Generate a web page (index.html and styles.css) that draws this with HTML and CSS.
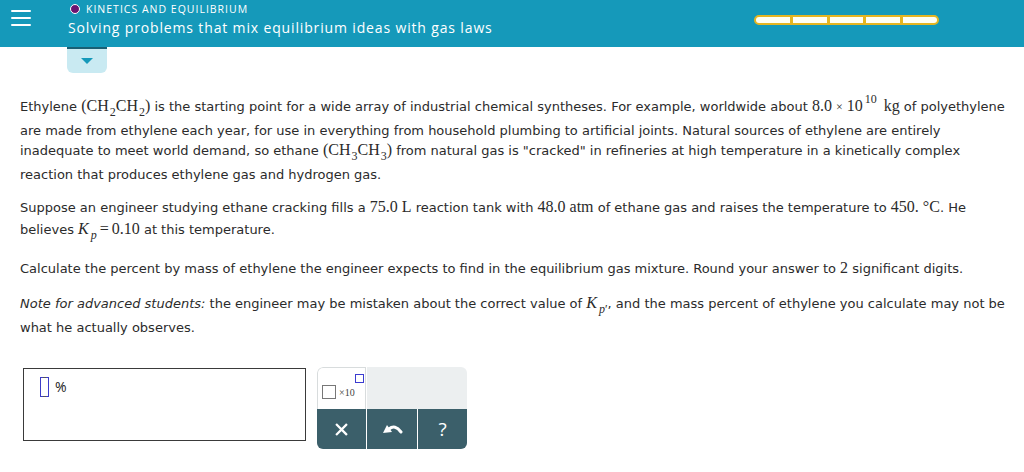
FILE: index.html
```html
<!DOCTYPE html>
<html>
<head>
<meta charset="utf-8">
<link rel="stylesheet" href="styles.css">
</head>
<body>
<header class="topbar">
  <div class="menu"><span></span><span></span><span></span></div>
  <div class="titles">
    <div class="topic"><span class="dot"></span>KINETICS AND EQUILIBRIUM</div>
    <div class="title">Solving problems that mix equilibrium ideas with gas laws</div>
  </div>
  <div class="progress">
    <span></span><span></span><span></span><span></span><span></span>
  </div>
</header>
<div class="tabrow"><div class="tab"><span class="tri"></span></div></div>
<main class="content">
  <p class="p1">Ethylene <span class="m">(CH<sub>2</sub>CH<sub>2</sub>)</span> is the starting point for a wide array of industrial chemical syntheses. For example, worldwide about <span class="m">8.0<span class="times">×</span>10<sup>10</sup> <span class="unit">kg</span></span> of polyethylene are made from ethylene each year, for use in everything from household plumbing to artificial joints. Natural sources of ethylene are entirely inadequate to meet world demand, so ethane <span class="m">(CH<sub>3</sub>CH<sub>3</sub>)</span> from natural gas is "cracked" in refineries at high temperature in a kinetically complex reaction that produces ethylene gas and hydrogen gas.</p>
  <p class="p2">Suppose an engineer studying ethane cracking fills a <span class="m">75.0 L</span> reaction tank with <span class="m">48.0 atm</span> of ethane gas and raises the temperature to <span class="m">450. °C</span>. He believes <span class="m"><i>K</i><sub class="subp"><i>p</i></sub><span class="eq">=</span>0.10</span> at this temperature.</p>
  <p class="p3">Calculate the percent by mass of ethylene the engineer expects to find in the equilibrium gas mixture. Round your answer to <span class="m flat">2</span> significant digits.</p>
  <p class="p4"><i>Note for advanced students:</i> the engineer may be mistaken about the correct value of <span class="m"><i>K</i><sub class="subp"><i>p</i>′</sub></span>, and the mass percent of ethylene you calculate may not be what he actually observes.</p>
</main>
<section class="answer">
  <div class="inputbox"><span class="caret"></span><span class="pct">%</span></div>
  <div class="keypad">
    <div class="key sci"><span class="box"></span><span class="x10">×10</span><span class="supbox"></span></div>
    <div class="key blank"></div>
    <div class="key act">
      <svg width="13" height="13" viewBox="0 0 14 14"><path d="M2 2 L12 12 M12 2 L2 12" stroke="#fff" stroke-width="2.4" stroke-linecap="square"/></svg>
    </div>
    <div class="key act">
      <svg width="22" height="14" viewBox="0 0 22 14"><path d="M8 7 Q14 2 20 10" stroke="#fff" stroke-width="3" fill="none" stroke-linecap="round"/><path d="M2 11 L6 3 L11 10 Z" fill="#fff"/></svg>
    </div>
    <div class="key act q">?</div>
  </div>
</section>
</body>
</html>
```
FILE: styles.css
```css
* { box-sizing: border-box; }
html, body { margin: 0; padding: 0; background: #fff; }
body { font-family: "DejaVu Sans", Verdana, sans-serif; color: #2b2b2b; width: 1024px; height: 472px; overflow: hidden; }

.topbar { height: 47px; background: #1599ba; display: flex; align-items: flex-start; position: relative; }
.menu { width: 20px; margin: 10px 0 0 11px; display: flex; flex-direction: column; gap: 5px; }
.menu span { display: block; height: 2px; background: #fff; border-radius: 1px; }
.titles { margin-left: 37px; padding-top: 2px; color: #fff; font-family: "Open Sans", sans-serif; }
.topic { font-size: 10.5px; letter-spacing: 1px; display: flex; align-items: center; height: 14px; }
.dot { width: 10px; height: 10px; border-radius: 50%; background: #6b1370; border: 1.5px solid #fff; margin: 0 6px 0 2px; }
.title { font-size: 14px; letter-spacing: 0.85px; margin-top: 2px; }
.progress { position: absolute; left: 754px; top: 15px; width: 185px; height: 10px; border: 2px solid #e5b521; border-radius: 5px; background: #e5b521; display: flex; gap: 3px; overflow: hidden; }
.progress span { flex: 1; background: #fffef4; }

.tabrow { padding-left: 67px; }
.tab { width: 40px; height: 26px; background: #c9eaf2; border-top: 2px solid #1a5f74; border-radius: 0 0 6px 6px; display: flex; justify-content: center; padding-top: 9px; }
.tri { width: 0; height: 0; border-left: 6px solid transparent; border-right: 6px solid transparent; border-top: 6px solid #1599ba; }

.content { padding: 20px 10px 0 20px; font-size: 13px; line-height: 19px; }
.content p { margin: 0 0 15px 0; }
.m { font-family: "Liberation Serif", "Times New Roman", serif; font-size: 16px; display: inline-block; padding-bottom: 3px; }
.m.flat { display: inline; padding: 0; }
.m sub, .m sup { font-size: 12px; line-height: 12px; display: inline-block; }
.m sub { vertical-align: -5px; margin-left: 1px; }
.m sub.subp { margin-left: 2px; }
.m sup { vertical-align: 8px; margin-left: 2px; }
.times { font-size: 12px; margin: 0 4px; }
.unit { margin-left: 3px; }
.eq { margin: 0 3px 0 3px; }
.p1 { margin-bottom: 13px !important; }
.p2 { margin-bottom: 14px !important; }

.answer { display: flex; align-items: flex-start; margin-top: 30px; padding-left: 23px; }
.inputbox { width: 283px; height: 73px; border: 1px solid #3a3a3a; margin-top: 1px; display: flex; align-items: flex-start; padding: 8px 0 0 16px; }
.caret { width: 9px; height: 20px; border: 1px solid #3c3cc8; position: relative; }
.caret::before, .caret::after { content: ""; position: absolute; left: 2px; width: 3px; height: 1px; background: #555; }
.caret::before { top: -1px; }
.caret::after { bottom: -1px; }
.pct { font-family: "Open Sans", sans-serif; font-size: 14px; margin-left: 6px; margin-top: 0; color: #222; }
.keypad { margin-left: 11px; width: 150px; display: grid; grid-template-columns: 49px 50px 49px; grid-template-rows: 42px 40px; column-gap: 1px; background: #fff; border-radius: 6px; overflow: hidden; }
.key { display: flex; align-items: center; justify-content: center; }
.sci { background: #fff; border: 1px solid #d8dcdd; border-bottom: none; border-radius: 6px 0 0 0; position: relative; justify-content: flex-start; padding-left: 4px; padding-top: 6px; }
.box { width: 14px; height: 14px; border: 1px solid #777; }
.x10 { font-family: "Liberation Serif", serif; font-size: 10px; color: #444; margin-left: 3px; margin-top: 2px; }
.supbox { position: absolute; left: 37px; top: 6px; width: 9px; height: 9px; border: 1.5px solid #3b3bd0; }
.blank { background: #eceff0; grid-column: span 2; }
.act { background: #3b5f6a; }
.q { color: #fff; font-family: "Open Sans", sans-serif; font-size: 19px; }
```
